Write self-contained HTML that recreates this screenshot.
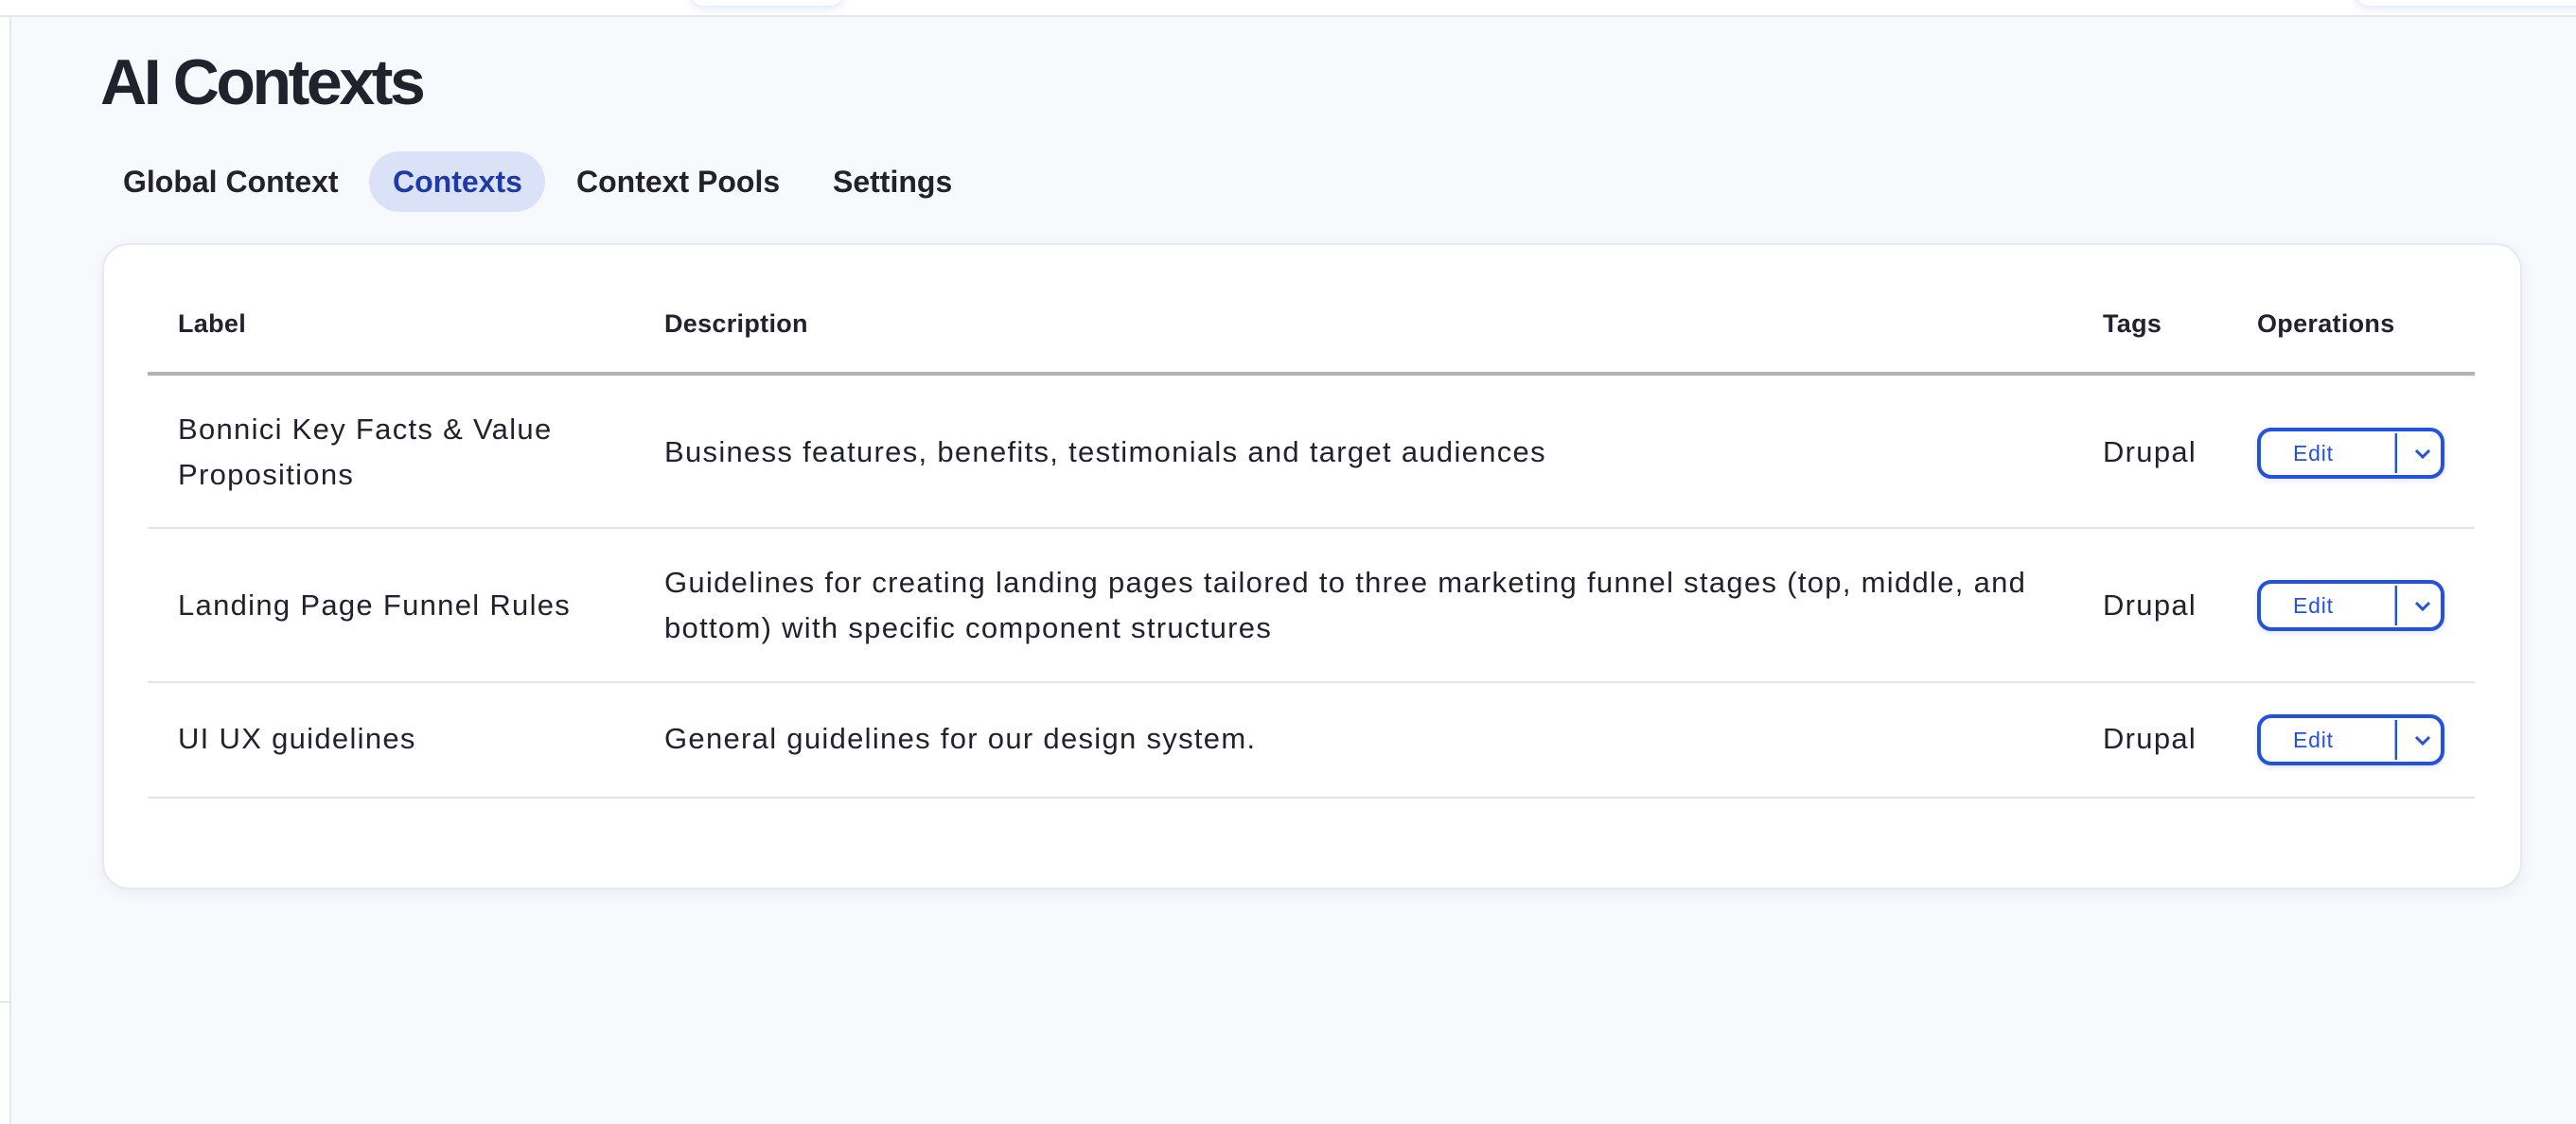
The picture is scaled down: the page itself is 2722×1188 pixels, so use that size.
<!DOCTYPE html>
<html><head><meta charset="utf-8"><style>
*{margin:0;padding:0;box-sizing:border-box}
html,body{width:2722px;height:1188px;overflow:hidden;background:#f8f9fd;font-family:"Liberation Sans",sans-serif;color:#1f1f2b}
.abs{position:absolute}
.top{left:0;top:0;width:2722px;height:18px;background:#fff;border-bottom:2px solid #e6e7ea}
.blob{top:-20px;height:26px;border-radius:20px;background:#fff;box-shadow:0 2px 10px rgba(120,130,230,.25)}
.left{left:0;top:19px;width:12px;height:1169px;background:#fff;border-right:2px solid #e6e7ea}
h1{position:absolute;left:106px;top:48px;font-size:68px;font-weight:700;letter-spacing:-3.4px;color:#22222e}
.tab{position:absolute;top:172px;font-size:32px;font-weight:700;color:#22222e;line-height:40px}
.pill{left:390px;top:160px;width:186px;height:64px;border-radius:32px;background:#dbe2f8}
.card{left:108px;top:257px;width:2557px;height:683px;background:#fff;border:2px solid #e8e9ee;border-radius:28px;box-shadow:0 4px 14px rgba(30,40,80,.06)}
.th{position:absolute;top:326px;font-size:27px;font-weight:700;color:#22222e;line-height:32px;letter-spacing:.3px}
.hl{left:156px;top:393px;width:2459px;height:4px;background:#b3b3b3}
.rl{left:156px;width:2459px;height:2px;background:#e4e4e6}
.td{position:absolute;font-size:31px;color:#22222e;line-height:48px;letter-spacing:1.3px}
.btn{position:absolute;left:2385px;width:198px;height:54px;border:4px solid #2352dd;border-radius:15px;background:#fff;box-shadow:0 2px 6px rgba(35,82,221,.15)}
.btn span{position:absolute;left:34px;top:10px;font-size:23px;color:#2352dd;line-height:26px;letter-spacing:.8px}
.btn i{position:absolute;left:141px;top:2px;width:3px;height:42px;background:#2352dd;border-left:1px solid #aab9f0}
.btn svg{position:absolute;left:160px;top:15px}
</style></head><body>
<div class="abs top"></div>
<div class="abs blob" style="left:730px;width:160px"></div>
<div class="abs blob" style="left:2490px;width:260px"></div>
<div class="abs left"></div>
<div class="abs" style="left:0;top:1058px;width:12px;height:2px;background:#e6e7ea"></div>
<h1>AI Contexts</h1>
<div class="abs pill"></div>
<div class="tab" style="left:130px">Global Context</div>
<div class="tab" style="left:415px;color:#1d3aa6">Contexts</div>
<div class="tab" style="left:609px">Context Pools</div>
<div class="tab" style="left:880px">Settings</div>
<div class="abs card"></div>
<div class="th" style="left:188px">Label</div>
<div class="th" style="left:702px">Description</div>
<div class="th" style="left:2222px">Tags</div>
<div class="th" style="left:2385px">Operations</div>
<div class="abs hl"></div>

<div class="td" style="left:188px;top:430px">Bonnici Key Facts &amp; Value<br>Propositions</div>
<div class="td" style="left:702px;top:454px">Business features, benefits, testimonials and target audiences</div>
<div class="td" style="left:2222px;top:454px">Drupal</div>
<div class="btn" style="top:452px"><span>Edit</span><i></i><svg width="22" height="16" viewBox="0 0 22 16"><path d="M4 5l7 7 7-7" fill="none" stroke="#2352dd" stroke-width="3"/></svg></div>
<div class="abs rl" style="top:557px"></div>

<div class="td" style="left:188px;top:616px">Landing Page Funnel Rules</div>
<div class="td" style="left:702px;top:592px">Guidelines for creating landing pages tailored to three marketing funnel stages (top, middle, and<br>bottom) with specific component structures</div>
<div class="td" style="left:2222px;top:616px">Drupal</div>
<div class="btn" style="top:613px"><span>Edit</span><i></i><svg width="22" height="16" viewBox="0 0 22 16"><path d="M4 5l7 7 7-7" fill="none" stroke="#2352dd" stroke-width="3"/></svg></div>
<div class="abs rl" style="top:720px"></div>

<div class="td" style="left:188px;top:757px">UI UX guidelines</div>
<div class="td" style="left:702px;top:757px">General guidelines for our design system.</div>
<div class="td" style="left:2222px;top:757px">Drupal</div>
<div class="btn" style="top:755px"><span>Edit</span><i></i><svg width="22" height="16" viewBox="0 0 22 16"><path d="M4 5l7 7 7-7" fill="none" stroke="#2352dd" stroke-width="3"/></svg></div>
<div class="abs rl" style="top:842px"></div>
</body></html>
